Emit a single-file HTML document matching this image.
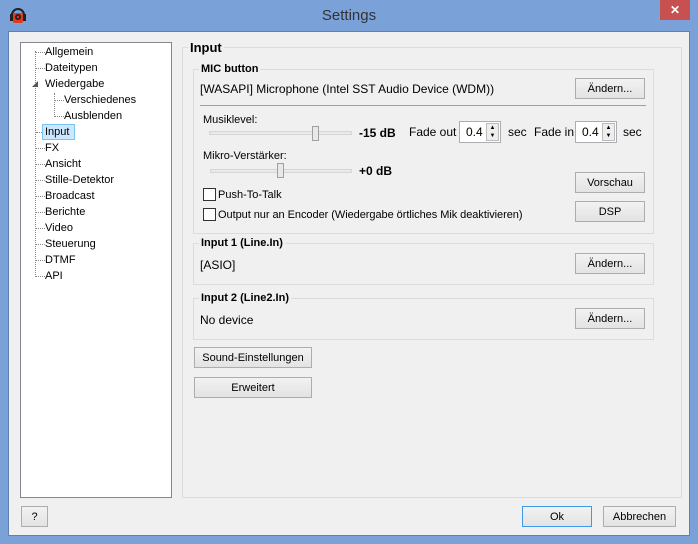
<!DOCTYPE html>
<html><head><meta charset="utf-8"><style>
*{box-sizing:border-box;margin:0;padding:0}
body{width:698px;height:544px;background:#7aa1d8;font-family:"Liberation Sans",sans-serif;font-size:11px;color:#000;position:relative;overflow:hidden}
.a{position:absolute}
.client{left:8px;top:31px;width:682px;height:505px;background:#f0f0f0;border:1px solid #5f80b3}
.title{left:0;top:7px;width:698px;text-align:center;font-size:15px;color:#333}
.close{left:660px;top:0;width:30px;height:20px;background:#c75050;color:#fff;text-align:center;font-size:12px;line-height:20px;font-weight:bold}
.grp{border:1px solid #dcdcdc}
.btn{background:linear-gradient(#f2f2f2,#e3e3e3);border:1px solid #adadad;display:flex;align-items:center;justify-content:center;font-size:11px;padding-top:1px}
.b{font-weight:bold}
.tree{left:20px;top:42px;width:152px;height:456px;background:#fff;border:1px solid #828790}
.ti{position:absolute;height:16px;line-height:16px;font-size:11px}
.dh{position:absolute;height:1px;border-top:1px dotted #888}
.dv{position:absolute;width:1px;border-left:1px dotted #888}
.cb{position:absolute;width:13px;height:13px;border:1px solid #333;background:#fff}
.track{position:absolute;height:4px;background:#e7eaea;border:1px solid #d6d6d6}
.thumb{position:absolute;width:7px;height:15px;background:#e8e8e8;border:1px solid #a0a0a0}
.spin{position:absolute;width:42px;height:22px;background:#fff;border:1px solid #abadb3;font-size:12px;line-height:20px;padding-left:6px}
.spin i{position:absolute;right:1px;top:1px;width:13px;height:18px;background:#eee;border:1px solid #bbb;font-style:normal;font-size:6px;line-height:8px;text-align:center}
</style></head><body>
<div class="a title">Settings</div>
<div class="a close">✕</div>
<svg class="a" style="left:9px;top:5px" width="18" height="20" viewBox="0 0 18 20"><path d="M3 10a6 6 0 0 1 12 0" stroke="#222" stroke-width="2" fill="none"/><rect x="4" y="8" width="10" height="10" rx="2" fill="#e03a1e"/><rect x="1" y="9" width="3" height="7" fill="#222"/><rect x="14" y="9" width="3" height="7" fill="#222"/><circle cx="9" cy="12" r="3" fill="#222"/><circle cx="9" cy="12" r="1.2" fill="#e03a1e"/></svg>
<div class="a client"></div>

<div class="a tree">
<div class="dv" style="left:14px;top:8px;height:226px"></div>
<div class="dv" style="left:33px;top:50px;height:24px"></div>
<div class="dh" style="left:15px;top:9px;width:9px"></div>
<div class="dh" style="left:15px;top:25px;width:9px"></div>
<div class="dh" style="left:34px;top:57px;width:9px"></div>
<div class="dh" style="left:34px;top:73px;width:9px"></div>
<div class="a" style="left:11px;top:38px;width:0;height:0;border-left:6px solid transparent;border-bottom:6px solid #555"></div>
<div class="ti" style="left:24px;top:1px">Allgemein</div>
<div class="ti" style="left:24px;top:17px">Dateitypen</div>
<div class="ti" style="left:24px;top:33px">Wiedergabe</div>
<div class="ti" style="left:43px;top:49px">Verschiedenes</div>
<div class="ti" style="left:43px;top:65px">Ausblenden</div>
<div class="ti" style="left:21px;top:81px;width:33px;background:#cce8ff;border:1px solid #7bc3f3;padding-left:2px;line-height:14px">Input</div>
<div class="dh" style="left:15px;top:89px;width:6px"></div>
<div class="dh" style="left:15px;top:105px;width:9px"></div><div class="ti" style="left:24px;top:97px">FX</div>
<div class="dh" style="left:15px;top:121px;width:9px"></div><div class="ti" style="left:24px;top:113px">Ansicht</div>
<div class="dh" style="left:15px;top:137px;width:9px"></div><div class="ti" style="left:24px;top:129px">Stille-Detektor</div>
<div class="dh" style="left:15px;top:153px;width:9px"></div><div class="ti" style="left:24px;top:145px">Broadcast</div>
<div class="dh" style="left:15px;top:169px;width:9px"></div><div class="ti" style="left:24px;top:161px">Berichte</div>
<div class="dh" style="left:15px;top:185px;width:9px"></div><div class="ti" style="left:24px;top:177px">Video</div>
<div class="dh" style="left:15px;top:201px;width:9px"></div><div class="ti" style="left:24px;top:193px">Steuerung</div>
<div class="dh" style="left:15px;top:217px;width:9px"></div><div class="ti" style="left:24px;top:209px">DTMF</div>
<div class="dh" style="left:15px;top:233px;width:9px"></div><div class="ti" style="left:24px;top:225px">API</div>
</div>

<div class="a grp" style="left:182px;top:47px;width:500px;height:451px"></div>
<div class="a b" style="left:188px;top:40px;font-size:13px;background:#f0f0f0;padding:0 2px">Input</div>

<div class="a grp" style="left:193px;top:69px;width:461px;height:165px"></div>
<div class="a b" style="left:199px;top:63px;background:#f0f0f0;padding:0 2px">MIC button</div>
<div class="a" style="left:200px;top:82px;font-size:12px">[WASAPI] Microphone (Intel SST Audio Device (WDM))</div>
<div class="a btn" style="left:575px;top:78px;width:70px;height:21px">Ändern...</div>
<div class="a" style="left:200px;top:105px;width:446px;height:1px;background:#a0a0a0"></div>
<div class="a" style="left:203px;top:114px">Musiklevel:</div>
<div class="track" style="left:209px;top:131px;width:143px"></div>
<div class="thumb" style="left:312px;top:126px"></div>
<div class="a b" style="left:359px;top:126px;font-size:12px">-15 dB</div>
<div class="a" style="left:409px;top:125px;font-size:12px">Fade out</div>
<div class="spin" style="left:459px;top:121px">0.4<i>▲<br>▼</i></div>
<div class="a" style="left:508px;top:125px;font-size:12px">sec</div>
<div class="a" style="left:534px;top:125px;font-size:12px">Fade in</div>
<div class="spin" style="left:575px;top:121px">0.4<i>▲<br>▼</i></div>
<div class="a" style="left:623px;top:125px;font-size:12px">sec</div>
<div class="a" style="left:203px;top:150px">Mikro-Verstärker:</div>
<div class="track" style="left:210px;top:169px;width:142px"></div>
<div class="thumb" style="left:277px;top:163px"></div>
<div class="a b" style="left:359px;top:164px;font-size:12px">+0 dB</div>
<div class="cb" style="left:203px;top:188px"></div>
<div class="a" style="left:218px;top:189px">Push-To-Talk</div>
<div class="cb" style="left:203px;top:208px"></div>
<div class="a" style="left:218px;top:209px;letter-spacing:-0.05px">Output nur an Encoder (Wiedergabe örtliches Mik deaktivieren)</div>
<div class="a btn" style="left:575px;top:172px;width:70px;height:21px">Vorschau</div>
<div class="a btn" style="left:575px;top:201px;width:70px;height:21px">DSP</div>

<div class="a grp" style="left:193px;top:243px;width:461px;height:42px"></div>
<div class="a b" style="left:199px;top:237px;background:#f0f0f0;padding:0 2px">Input 1 (Line.In)</div>
<div class="a" style="left:200px;top:258px;font-size:12px">[ASIO]</div>
<div class="a btn" style="left:575px;top:253px;width:70px;height:21px">Ändern...</div>

<div class="a grp" style="left:193px;top:298px;width:461px;height:42px"></div>
<div class="a b" style="left:199px;top:292px;background:#f0f0f0;padding:0 2px">Input 2 (Line2.In)</div>
<div class="a" style="left:200px;top:313px;font-size:12px">No device</div>
<div class="a btn" style="left:575px;top:308px;width:70px;height:21px">Ändern...</div>

<div class="a btn" style="left:194px;top:347px;width:118px;height:21px">Sound-Einstellungen</div>
<div class="a btn" style="left:194px;top:377px;width:118px;height:21px">Erweitert</div>

<div class="a btn" style="left:21px;top:506px;width:27px;height:21px">?</div>
<div class="a btn" style="left:522px;top:506px;width:70px;height:21px;border-color:#3c9be8">Ok</div>
<div class="a btn" style="left:603px;top:506px;width:73px;height:21px">Abbrechen</div>
</body></html>
